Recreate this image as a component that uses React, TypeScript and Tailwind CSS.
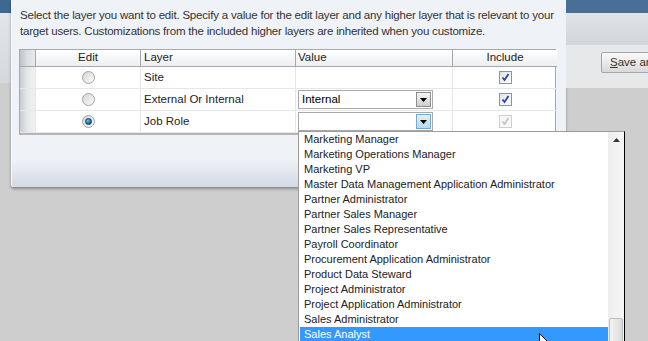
const font = { fontFamily: '"Liberation Sans", Arial, sans-serif' };

const roles = [
  'Marketing Manager',
  'Marketing Operations Manager',
  'Marketing VP',
  'Master Data Management Application Administrator',
  'Partner Administrator',
  'Partner Sales Manager',
  'Partner Sales Representative',
  'Payroll Coordinator',
  'Procurement Application Administrator',
  'Product Data Steward',
  'Project Administrator',
  'Project Application Administrator',
  'Sales Administrator',
  'Sales Analyst',
];

function Radio({ checked = false }: { checked?: boolean }) {
  return (
    <div className="w-[13px] h-[13px] rounded-full border border-[#a3a3a3] bg-gradient-to-br from-[#d6d6d6] to-[#fbfbfb] flex items-center justify-center">
      {checked && (
        <div className="w-[7px] h-[7px] rounded-full bg-[radial-gradient(circle_at_35%_35%,#6ec3f0,#0f5e9c_70%)] border border-[#0b3f6b]" />
      )}
    </div>
  );
}

function Check({ disabled = false }: { disabled?: boolean }) {
  return (
    <div
      className={`w-[13px] h-[13px] border flex items-center justify-center ${
        disabled ? 'border-[#cfcfcf] bg-[#f7f7f7]' : 'border-[#8a94a6] bg-gradient-to-br from-[#dfe3ea] to-white'
      }`}
    >
      <svg width="9" height="9" viewBox="0 0 9 9">
        <path
          d="M1.5 4.5 L3.5 7 L7.5 1"
          fill="none"
          stroke={disabled ? '#c4c4c4' : '#2b45a6'}
          strokeWidth="1.8"
        />
      </svg>
    </div>
  );
}

function Select({ value = '', active = false }: { value?: string; active?: boolean }) {
  return (
    <div className="w-[135px] h-[19px] border border-[#a9a9a9] bg-white flex items-center justify-between pl-[3px] pr-[1px]">
      <span className="text-[11.5px] text-black">{value}</span>
      <div
        className={`w-[15px] h-[15px] border flex items-center justify-center ${
          active
            ? 'border-[#7aa7cc] bg-gradient-to-b from-[#e3f1fb] to-[#b7d8ef]'
            : 'border-[#8d8d8d] bg-gradient-to-b from-[#f6f6f6] to-[#cfcfcf]'
        }`}
      >
        <svg width="7" height="4" viewBox="0 0 7 4">
          <path d="M0 0 H7 L3.5 4 Z" fill="#000" />
        </svg>
      </div>
    </div>
  );
}

const cell = 'border-r border-[#e3e3e3] flex items-center';
const rowCls = 'h-[22px] border-b border-[#e6e6e6]';

function Row({ layer, radio, value, check }: { layer: string; radio?: boolean; value?: React.ReactNode; check: React.ReactNode }) {
  return (
    <>
      <div className={`${rowCls} border-r border-[#c9ced6] bg-gradient-to-r from-[#c9cdd3] via-[#e6e8eb] to-[#eef0f2]`} />
      <div className={`${rowCls} ${cell} justify-center`}>
        <Radio checked={radio} />
      </div>
      <div className={`${rowCls} ${cell} pl-[3px] text-[11.5px] text-[#222]`}>{layer}</div>
      <div className={`${rowCls} ${cell} pl-[2px]`}>{value}</div>
      <div className={`${rowCls} flex items-center justify-center`}>{check}</div>
    </>
  );
}

export default function App() {
  return (
    <div className="relative w-[648px] h-[341px] overflow-hidden bg-[#cecece] flex" style={font}>
      {/* left page strip */}
      <div className="w-[11px] shrink-0 flex flex-col">
        <div className="h-[13px] bg-[#3c6891]" />
        <div className="h-[70px] bg-gradient-to-b from-[#e2e6eb] to-[#d5d9de]" />
      </div>

      {/* dialog */}
      <div className="w-[555px] shrink-0 h-[187px] flex flex-col rounded-bl-[3px] shadow-[0_2px_3px_rgba(0,0,0,0.35)] bg-gradient-to-b from-[#eff2f6] from-[85%] to-[#d3dae5] border-l border-[#f8f9fb]">
        <p className="pl-[8px] pt-[7px] text-[11.5px] leading-[16px] text-[#333] tracking-[-0.2px] whitespace-nowrap">
          Select the layer you want to edit. Specify a value for the edit layer and any higher layer that is relevant to your
          <br />
          target users. Customizations from the included higher layers are inherited when you customize.
        </p>
        <div className="ml-[7px] mt-[10px] w-[537px] border border-[#a8a8a8] border-b-2 border-b-[#b5b5b5] bg-white grid grid-cols-[16px_105px_155px_157px_104px]">
          <div className="h-[17px] border-b border-r border-[#a8a8a8] bg-gradient-to-r from-[#bfc3c9] via-[#dcdfe3] to-[#e8eaed]" />
          <div className="h-[17px] border-b border-r border-[#a8a8a8] bg-gradient-to-b from-white to-[#eceef1] text-[11.5px] text-[#222] flex items-center justify-center">Edit</div>
          <div className="h-[17px] border-b border-r border-[#a8a8a8] bg-gradient-to-b from-white to-[#eceef1] text-[11.5px] text-[#222] flex items-center pl-[3px]">Layer</div>
          <div className="h-[17px] border-b border-r border-[#a8a8a8] bg-gradient-to-b from-white to-[#eceef1] text-[11.5px] text-[#222] flex items-center pl-[2px]">Value</div>
          <div className="h-[17px] border-b border-[#a8a8a8] bg-gradient-to-b from-white to-[#eceef1] text-[11.5px] text-[#222] flex items-center justify-center">Include</div>

          <Row layer="Site" check={<Check />} />
          <Row layer="External Or Internal" value={<Select value="Internal" />} check={<Check />} />
          <Row layer="Job Role" radio value={<Select active />} check={<Check disabled />} />
        </div>
      </div>

      {/* right page area */}
      <div className="flex-1 min-w-0 flex flex-col">
        <div className="h-[13px] bg-[#4a6f96]" />
        <div className="h-[32px] bg-gradient-to-b from-[#e0e4e9] to-[#d2d6db]" />
        <div className="h-[43px] bg-[#e7e8ea] pt-[7px] pl-[35px] overflow-hidden">
          <div className="w-[60px] h-[21px] border border-[#a6a6a6] rounded-[2px] bg-gradient-to-b from-[#fafafa] to-[#d9d9d9] text-[11.5px] text-[#333] flex items-center pl-[8px] whitespace-nowrap">
            <span className="underline">S</span>ave and Close
          </div>
        </div>
      </div>

      {/* open dropdown list */}
      <div className="absolute left-[298px] top-[131px] w-[327px] h-[215px] bg-white border-l border-t border-[#9c9c9c] border-r border-r-black flex">
        <div className="flex-1 pl-[1px]">
          {roles.map((r) => (
            <div
              key={r}
              className={`h-[15px] pl-[4px] text-[11px] leading-[15px] whitespace-nowrap ${
                r === 'Sales Analyst' ? 'bg-[#3399ff] text-white' : 'text-[#222]'
              }`}
            >
              {r}
            </div>
          ))}
        </div>
        <div className="w-[16px] bg-gradient-to-r from-[#ededed] to-[#f7f7f7] flex flex-col items-center">
          <div className="h-[16px] flex items-center justify-center mt-[1px]">
            <svg width="7" height="4" viewBox="0 0 7 4">
              <path d="M3.5 0 L7 4 H0 Z" fill="#333" />
            </svg>
          </div>
          <div className="mt-[170px] w-[14px] h-[30px] rounded-[2px] border border-[#bdbdbd] bg-gradient-to-r from-[#f4f4f4] to-[#dcdcdc]" />
        </div>
      </div>

      {/* mouse pointer */}
      <svg className="absolute left-[539px] top-[333px]" width="12" height="19" viewBox="0 0 12 19">
        <path d="M0.5 0.5 V15 L4 11.5 L6.5 17.5 L8.5 16.5 L6 10.5 H10.5 Z" fill="#fff" stroke="#000" strokeWidth="1" />
      </svg>
    </div>
  );
}
